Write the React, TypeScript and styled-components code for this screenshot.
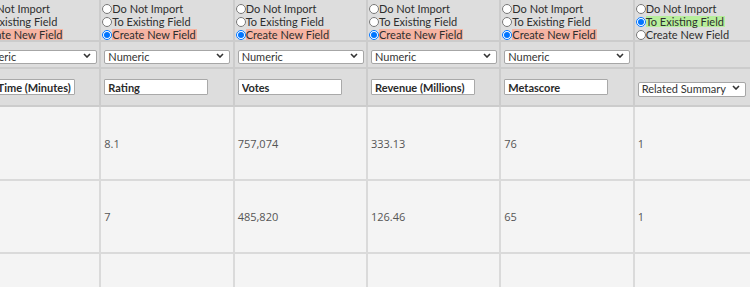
import { useLayoutEffect, useRef } from "react";
import styled, { createGlobalStyle, css } from "styled-components";

const GlobalStyle = createGlobalStyle`
  html, body {
    margin: 0;
    padding: 0;
    background: #f4f4f4;
    overflow: hidden;
  }
`;

type ImportMode = "skip" | "existing" | "new";

type Column = {
  mode: ImportMode;
  type?: string;
  name?: string;
  target?: string;
  values: string[];
};

const columns: Column[] = [
  { mode: "new", type: "Numeric", name: "Running Time (Minutes)", values: ["121", "124", ""] },
  { mode: "new", type: "Numeric", name: "Rating", values: ["8.1", "7", ""] },
  { mode: "new", type: "Numeric", name: "Votes", values: ["757,074", "485,820", ""] },
  { mode: "new", type: "Numeric", name: "Revenue (Millions)", values: ["333.13", "126.46", ""] },
  { mode: "new", type: "Numeric", name: "Metascore", values: ["76", "65", ""] },
  { mode: "existing", target: "Related Summary", values: ["1", "1", ""] },
];

const options: { mode: ImportMode; label: string }[] = [
  { mode: "skip", label: "Do Not Import" },
  { mode: "existing", label: "To Existing Field" },
  { mode: "new", label: "Create New Field" },
];

const ScrollArea = styled.div`
  width: 750px;
  height: 287px;
  overflow-x: auto;
  overflow-y: hidden;
  scrollbar-width: none;
  &::-webkit-scrollbar {
    display: none;
  }
`;

const Sheet = styled.div<{ $cols: number }>`
  display: grid;
  grid-template-columns: repeat(${({ $cols }) => $cols}, 133.33px);
  grid-template-rows: 42px 27px 38px 74px 73px 73px;
  width: max-content;
  font-family: Lato, "Liberation Sans", sans-serif;
`;

const Cell = styled.div<{ $head?: boolean; $top?: boolean }>`
  box-sizing: border-box;
  display: flex;
  align-items: ${({ $top }) => ($top ? "flex-start" : "center")};
  padding-left: 3px;
  overflow: hidden;
  white-space: nowrap;
  ${({ $head }) =>
    $head
      ? css`
          background: #dddddd;
          border-right: 2px solid #cccccc;
          border-bottom: 2px solid #cccccc;
        `
      : css`
          background: #f4f4f4;
          border-right: 2px solid #dadada;
          border-bottom: 2px solid #dadada;
        `}
`;

const RadioGroup = styled.div`
  display: flex;
  flex-direction: column;
  padding-top: 2px;
  margin-left: -2px;
`;

const Option = styled.label`
  display: flex;
  align-items: center;
  height: 13px;
  font-size: 11px;
  color: #2e2e2e;
  cursor: pointer;
`;

const Radio = styled.input`
  width: 10px;
  height: 10px;
  margin: 0;
  flex: none;
`;

const OptionText = styled.span<{ $mark?: "new" | "existing" }>`
  display: inline-block;
  line-height: 11px;
  height: 11px;
  padding-right: 1px;
  background: ${({ $mark }) =>
    $mark === "new" ? "#f6b4a3" : $mark === "existing" ? "#b7ee9c" : "transparent"};
`;

const SelectWrap = styled.div<{ $width: number }>`
  position: relative;
  width: ${({ $width }) => $width}px;
  flex: none;
`;

const Select = styled.select<{ $height: number }>`
  appearance: none;
  box-sizing: border-box;
  width: 100%;
  height: ${({ $height }) => $height}px;
  margin: 0;
  padding: 0 14px 0 3px;
  border: 1px solid #a6a6a6;
  border-radius: 2px;
  background: #ffffff;
  font-family: Lato, "Liberation Sans", sans-serif;
  font-size: 11px;
  line-height: 12px;
  color: #333;
  outline: none;
`;

const Chevron = styled.svg`
  position: absolute;
  right: 6px;
  top: 50%;
  margin-top: -2px;
  pointer-events: none;
`;

const NameInput = styled.input`
  box-sizing: border-box;
  width: 104px;
  height: 16px;
  margin: 0;
  padding: 0 3px;
  border: 1px solid #a9a9a9;
  border-radius: 1px;
  background: #ffffff;
  font-family: Lato, "Liberation Sans", sans-serif;
  font-size: 11px;
  font-weight: 700;
  color: #2a2a2a;
  outline: none;
`;

const Value = styled.span`
  font-family: "Open Sans", "Liberation Sans", sans-serif;
  font-size: 11px;
  color: #555;
`;

function Dropdown({ value, width, height }: { value: string; width: number; height: number }) {
  return (
    <SelectWrap $width={width}>
      <Select $height={height} defaultValue={value}>
        <option>{value}</option>
      </Select>
      <Chevron width="8" height="5" viewBox="0 0 8 5">
        <path d="M1 1 L4 4 L7 1" fill="none" stroke="#333" strokeWidth="1.6" />
      </Chevron>
    </SelectWrap>
  );
}

// long field names show their end, as after editing
function FieldName({ value }: { value: string }) {
  const ref = useRef<HTMLInputElement>(null);
  useLayoutEffect(() => {
    if (ref.current) ref.current.scrollLeft = ref.current.scrollWidth;
  }, []);
  return <NameInput ref={ref} defaultValue={value} />;
}

export default function App() {
  const scrollRef = useRef<HTMLDivElement>(null);

  useLayoutEffect(() => {
    if (scrollRef.current) scrollRef.current.scrollLeft = 32;
  }, []);

  return (
    <>
      <GlobalStyle />
      <ScrollArea ref={scrollRef}>
        <Sheet $cols={columns.length}>
          {columns.map((col, i) => (
            <Cell key={`mode-${i}`} $head $top>
              <RadioGroup>
                {options.map((opt) => {
                  const checked = col.mode === opt.mode;
                  const mark = checked && opt.mode !== "skip" ? opt.mode : undefined;
                  return (
                    <Option key={opt.mode}>
                      <Radio type="radio" name={`import-${i}`} defaultChecked={checked} />
                      <OptionText $mark={mark as "new" | "existing" | undefined}>{opt.label}</OptionText>
                    </Option>
                  );
                })}
              </RadioGroup>
            </Cell>
          ))}

          {columns.map((col, i) => (
            <Cell key={`type-${i}`} $head>
              {col.type && <Dropdown value={col.type} width={126} height={14} />}
            </Cell>
          ))}

          {columns.map((col, i) => (
            <Cell key={`name-${i}`} $head>
              {col.name ? (
                <FieldName value={col.name} />
              ) : (
                col.target && <Dropdown value={col.target} width={108} height={15} />
              )}
            </Cell>
          ))}

          {[0, 1, 2].map((row) =>
            columns.map((col, i) => (
              <Cell key={`v-${row}-${i}`}>
                <Value>{col.values[row]}</Value>
              </Cell>
            ))
          )}
        </Sheet>
      </ScrollArea>
    </>
  );
}
